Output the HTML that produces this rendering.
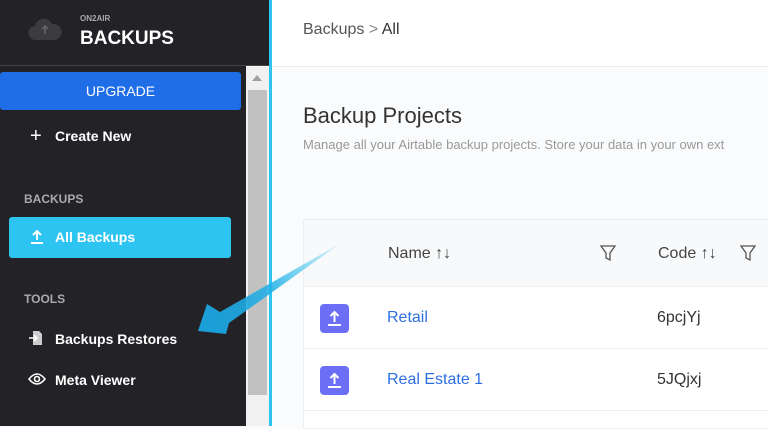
<!DOCTYPE html>
<html><head><style>
*{margin:0;padding:0;box-sizing:border-box}
body{width:768px;height:426px;overflow:hidden;font-family:"Liberation Sans",sans-serif;background:#fafbfc;position:relative}
.sb{position:absolute;left:0;top:0;width:246px;height:426px;background:#232226}
.top{position:absolute;left:0;top:0;width:269px;height:66px;background:#232226;border-bottom:1px solid #444}
.scr{position:absolute;left:246px;top:67px;width:23px;height:359px;background:#f1f1f1}
.thumb{position:absolute;left:248px;top:90px;width:19px;height:305px;background:#c1c1c1}
.cy{position:absolute;left:269px;top:0;width:3px;height:426px;background:#2ec4f2}
.w{color:#fff;font-weight:bold;position:absolute}
.lbl{position:absolute;color:#aaa;font-size:12px;font-weight:bold}
.main{position:absolute;left:272px;top:0;right:0;height:67px;background:#fff;border-bottom:1px solid #eee}
.card{position:absolute;left:303px;top:219px;width:470px;height:210px;background:#fff;border:1px solid #eee}
.hd{position:absolute;left:0;top:0;width:100%;height:67px;background:#f8f9fa;border-bottom:1px solid #eee}
.row{position:absolute;left:0;width:100%;height:62px;border-bottom:1px solid #eee}
.ic{position:absolute;left:16px;top:17px;width:29px;height:29px;background:#6c6ff5;border-radius:4px}
.a{position:absolute;left:83px;top:22px;color:#2d6fe0;font-size:16px}
.c{position:absolute;left:353px;top:22px;color:#333;font-size:16px}
</style></head><body>
<div class="sb"></div>
<div class="top">
<svg style="position:absolute;left:28px;top:17px" width="34" height="24" viewBox="0 0 34 24"><path d="M8 23a7 7 0 0 1-1-14 9 9 0 0 1 17-2 7 7 0 0 1 3 16z" fill="#3c3c40"/><path d="M17 17V9m-3 3l3-3 3 3" stroke="#666" stroke-width="1.6" fill="none"/></svg>
<div style="position:absolute;left:80px;top:14px;color:#aaa;font-size:8px;font-weight:bold">ON2AIR</div>
<div class="w" style="left:80px;top:28px;font-size:19px">BACKUPS</div>
</div>
<div class="scr"></div><div class="thumb"></div>
<div style="position:absolute;left:252px;top:75px;border:5px solid transparent;border-bottom:6px solid #a0a0a0;border-top:0"></div>
<div class="cy"></div>
<div style="position:absolute;left:0;top:72px;width:241px;height:38px;background:#1f6ee8;border-radius:3px;color:#fff;font-size:14px;text-align:center;line-height:38px">UPGRADE</div>
<div class="w" style="left:30px;top:125px;font-size:20px;font-weight:normal">+</div>
<div class="w" style="left:55px;top:128px;font-size:14px">Create New</div>
<div class="lbl" style="left:24px;top:192px">BACKUPS</div>
<div style="position:absolute;left:9px;top:217px;width:222px;height:41px;background:#2ec4f2;border-radius:3px"></div>
<svg style="position:absolute;left:29px;top:229px" width="16" height="16"><path d="M8 11V2M4 6l4-4 4 4M2 14h12" stroke="#fff" stroke-width="2" fill="none"/></svg>
<div class="w" style="left:55px;top:229px;font-size:14px">All Backups</div>
<div class="lbl" style="left:24px;top:292px">TOOLS</div>
<svg style="position:absolute;left:28px;top:330px" width="16" height="16"><path d="M5 1h6l3 3v11H5z" fill="#ccc"/><path d="M1 8h8M6 5l3 3-3 3" stroke="#fff" stroke-width="1.6" fill="none"/></svg>
<div class="w" style="left:55px;top:331px;font-size:14px">Backups Restores</div>
<svg style="position:absolute;left:28px;top:372px" width="18" height="14"><path d="M1 7q8-10 16 0q-8 10-16 0z" stroke="#fff" stroke-width="1.6" fill="none"/><circle cx="9" cy="7" r="2.5" stroke="#fff" stroke-width="1.6" fill="none"/></svg>
<div class="w" style="left:55px;top:372px;font-size:14px">Meta Viewer</div>
<div class="main"><div style="position:absolute;left:31px;top:21px;font-size:16px;color:#555">Backups <span style="color:#888">&gt;</span> <span style="color:#333">All</span></div></div>
<div style="position:absolute;left:303px;top:103px;font-size:22px;color:#333">Backup Projects</div>
<div style="position:absolute;left:303px;top:137px;font-size:13px;color:#999;white-space:nowrap">Manage all your Airtable backup projects. Store your data in your own ext</div>
<div class="card">
<div class="hd">
<div style="position:absolute;left:84px;top:25px;font-size:16px;color:#444">Name ↑↓</div>
<svg style="position:absolute;left:296px;top:25px" width="16" height="16"><path d="M1 1h14l-5 7v7l-4-2V8z" stroke="#555" stroke-width="1.3" fill="none"/></svg>
<div style="position:absolute;left:354px;top:25px;font-size:16px;color:#444">Code ↑↓</div>
<svg style="position:absolute;left:436px;top:25px" width="16" height="16"><path d="M1 1h14l-5 7v7l-4-2V8z" stroke="#555" stroke-width="1.3" fill="none"/></svg>
</div>
<div class="row" style="top:67px"><div class="ic"><svg width="29" height="29"><path d="M14.5 18V8m-4 4l4-4 4 4M8 21h13" stroke="#fff" stroke-width="2" fill="none"/></svg></div><div class="a">Retail</div><div class="c" style="left:353px">6pcjYj</div></div>
<div class="row" style="top:129px"><div class="ic"><svg width="29" height="29"><path d="M14.5 18V8m-4 4l4-4 4 4M8 21h13" stroke="#fff" stroke-width="2" fill="none"/></svg></div><div class="a">Real Estate 1</div><div class="c">5JQjxj</div></div>
</div>
<svg style="position:absolute;left:0;top:0" width="768" height="426"><defs><linearGradient id="g" x1="340" y1="243" x2="205" y2="330" gradientUnits="userSpaceOnUse"><stop offset="0" stop-color="#2ec4f2" stop-opacity="0.15"/><stop offset="0.5" stop-color="#22b0e6" stop-opacity="0.85"/><stop offset="1" stop-color="#1a9fd8"/></linearGradient></defs>
<path d="M341 243L220 312 207 304 198 331 226 334 229 323z" fill="url(#g)"/></svg>
</body></html>
